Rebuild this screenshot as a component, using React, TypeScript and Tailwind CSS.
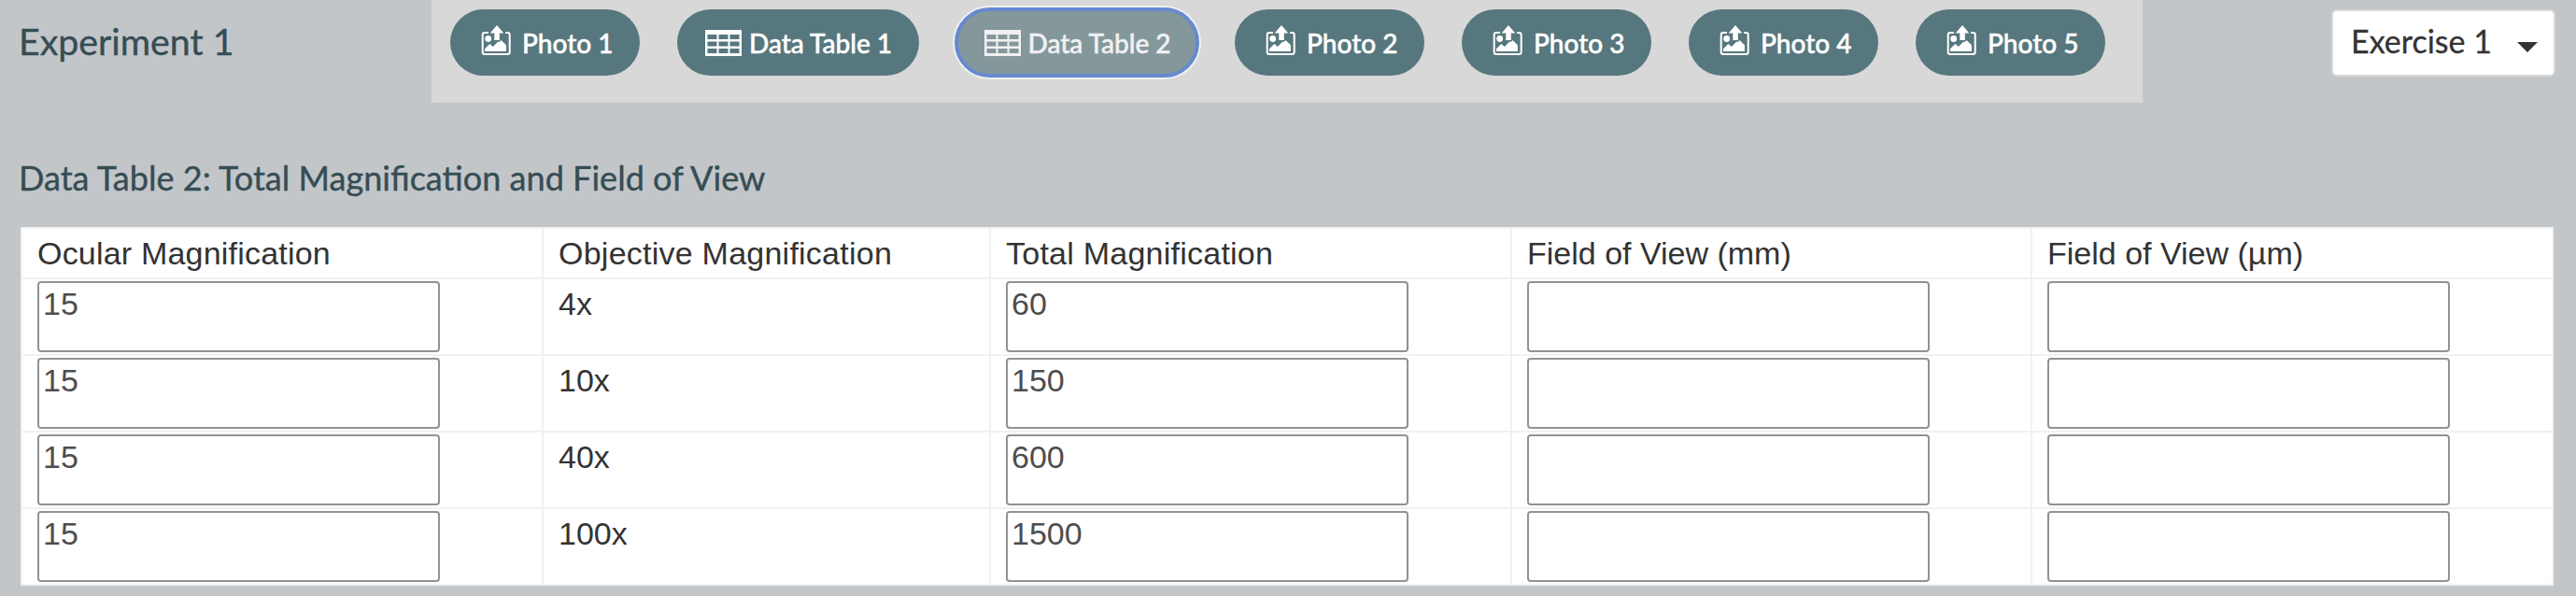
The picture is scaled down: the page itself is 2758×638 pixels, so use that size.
import clsx from "clsx";

type Tab = { kind: "photo" | "table"; label: string; active?: boolean };

const tabs: Tab[] = [
  { kind: "photo", label: "Photo 1" },
  { kind: "table", label: "Data Table 1" },
  { kind: "table", label: "Data Table 2", active: true },
  { kind: "photo", label: "Photo 2" },
  { kind: "photo", label: "Photo 3" },
  { kind: "photo", label: "Photo 4" },
  { kind: "photo", label: "Photo 5" },
];

const headers = [
  { label: "Ocular Magnification", tracking: "tracking-[0.2px]" },
  { label: "Objective Magnification", tracking: "tracking-[0.24px]" },
  { label: "Total Magnification", tracking: "tracking-[0.24px]" },
  { label: "Field of View (mm)", tracking: "tracking-normal" },
  { label: "Field of View (µm)", tracking: "tracking-normal" },
];

const rows = [
  { ocular: "15", objective: "4x", total: "60" },
  { ocular: "15", objective: "10x", total: "150" },
  { ocular: "15", objective: "40x", total: "600" },
  { ocular: "15", objective: "100x", total: "1500" },
];

function PhotoIcon() {
  return (
    <svg width="32" height="33" viewBox="0 0 32 33" fill="none" className="mb-1">
      <path
        d="M8 8H4Q1.7 8 1.7 10.3V28.7Q1.7 31 4 31H28.4Q30.7 31 30.7 28.7V10.3Q30.7 8 28.4 8H26"
        stroke="currentColor"
        strokeWidth="2"
      />
      <circle cx="7.7" cy="14.5" r="3.4" fill="currentColor" />
      <path d="M17 0L24.3 8.5H19.8V16H14.3V8.5H9.7Z" fill="currentColor" />
      <path
        d="M4 28V25.3L9.4 20L12.9 23L18 17.8H20L21.5 16L26.9 21.3V28Z"
        fill="currentColor"
      />
    </svg>
  );
}

function TableIcon() {
  return (
    <svg width="39" height="28" viewBox="0 0 39 28">
      <path
        fillRule="evenodd"
        fill="currentColor"
        d="M0 0H39V28H0ZM2.5 5V10H12.5V5ZM14.5 5V10H24.5V5ZM26.5 5V10H36.5V5ZM2.5 12.5V17.5H12.5V12.5ZM14.5 12.5V17.5H24.5V12.5ZM26.5 12.5V17.5H36.5V12.5ZM2.5 20V25H12.5V20ZM14.5 20V25H24.5V20ZM26.5 20V25H36.5V20Z"
      />
    </svg>
  );
}

function TabButton({ kind, label, active }: Tab) {
  return (
    <button
      className={clsx(
        "flex h-[71px] items-center rounded-[36px] text-[28px] leading-none font-medium [-webkit-text-stroke:0.5px]",
        kind === "photo" ? "w-[203px] pl-[33px]" : "w-[258.5px] pl-[30px]",
        active
          ? "bg-[#84989c] text-[#f1f1f1] shadow-[0_0_0_4px_#f1f1f1] outline-4 -outline-offset-2 outline-[#678acf]"
          : "bg-[#57777e] text-white"
      )}
    >
      {kind === "photo" ? <PhotoIcon /> : <TableIcon />}
      <span className={kind === "photo" ? "ml-3" : "ml-2"}>{label}</span>
    </button>
  );
}

function AnswerBox({ value = "" }: { value?: string }) {
  return (
    <textarea
      className="block h-[76px] w-[431px] resize-none overflow-hidden rounded-[4px] border-2 border-[#929292] bg-white px-1 pt-0.5 leading-10 text-[#4d4d4d]"
      defaultValue={value}
    />
  );
}

const cell = "border-2 border-[#f1f1f1] pl-4 align-top";

export default function App() {
  return (
    <div className="h-[638px] w-[2758px] overflow-hidden bg-[#c2c6c9] font-['Lato',sans-serif]">
      <header className="flex h-[110px] items-start">
        <h1 className="w-[462px] pt-[21px] pl-5 text-[39.3px] leading-[46px] text-[#364d54] [-webkit-text-stroke:0.4px]">
          Experiment 1
        </h1>
        <nav className="flex h-[110px] w-[1832px] gap-10 bg-[#d8d8d8] pt-2.5 pl-5">
          {tabs.map((tab) => (
            <TabButton key={tab.label} {...tab} />
          ))}
        </nav>
        <button className="mt-2.5 ml-[202px] flex h-[72px] w-[240px] items-center justify-between rounded-md border-2 border-[#d9d9d9] bg-white pr-[17px] pb-1 pl-[19px] text-[34px] leading-none text-[#333333] [-webkit-text-stroke:0.3px]">
          Exercise 1
          <svg width="22" height="11" viewBox="0 0 22 11" className="mt-[13px]">
            <path d="M0 0H22L11 11Z" fill="currentColor" />
          </svg>
        </button>
      </header>
      <h2 className="h-[133px] pt-[57px] pl-5 text-[36.1px] leading-[46px] text-[#364d54] [-webkit-text-stroke:0.4px]">
        Data Table 2: Total Magnification and Field of View
      </h2>
      <table className="ml-[22px] h-[384px] w-[2712px] table-fixed border-collapse bg-white font-['Liberation_Sans',Arial,sans-serif] text-[34px] text-[#333333]">
        <colgroup>
          <col className="w-[558px]" />
          <col className="w-[479px]" />
          <col className="w-[558px]" />
          <col className="w-[557px]" />
          <col className="w-[558px]" />
        </colgroup>
        <thead>
          <tr className="h-[54px]">
            {headers.map(({ label, tracking }) => (
              <th
                key={label}
                className={clsx(cell, tracking, "pt-1.5 text-left leading-10 font-normal")}
              >
                {label}
              </th>
            ))}
          </tr>
        </thead>
        <tbody>
          {rows.map((row) => (
            <tr key={row.objective} className="h-[82px]">
              <td className={clsx(cell, "pt-0.5")}>
                <AnswerBox value={row.ocular} />
              </td>
              <td className={clsx(cell, "pt-1.5 leading-10")}>{row.objective}</td>
              <td className={clsx(cell, "pt-0.5")}>
                <AnswerBox value={row.total} />
              </td>
              <td className={clsx(cell, "pt-0.5")}>
                <AnswerBox />
              </td>
              <td className={clsx(cell, "pt-0.5")}>
                <AnswerBox />
              </td>
            </tr>
          ))}
        </tbody>
      </table>
    </div>
  );
}
